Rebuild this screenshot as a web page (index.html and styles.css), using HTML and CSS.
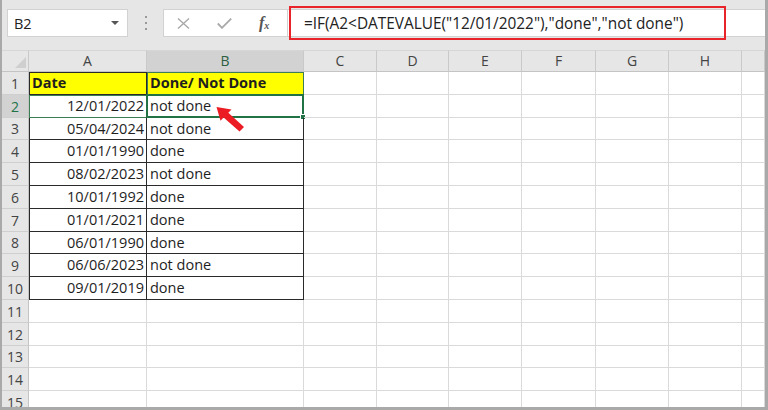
FILE: index.html
```html
<!DOCTYPE html>
<html>
<head>
<meta charset="utf-8">
<link rel="stylesheet" href="styles.css">
</head>
<body>
<div class="frame">
  <div class="toolbar">
    <div class="namebox"><span>B2</span><span class="caret"></span></div>
    <div class="dots"><i></i><i></i><i></i></div>
    <div class="fxbox">
      <svg class="ico" width="13" height="11" viewBox="0 0 13 11"><path d="M1 0.5 L12 10.5 M12 0.5 L1 10.5" stroke="#a9a9a9" stroke-width="1.4" fill="none"/></svg>
      <svg class="ico" width="15" height="11" viewBox="0 0 15 11"><path d="M0.8 5.5 L5 9.8 L14.2 0.6" stroke="#a9a9a9" stroke-width="1.8" fill="none"/></svg>
      <span class="fx">f<sub>x</sub></span>
    </div>
    <div class="formula"><span>=IF(A2&lt;DATEVALUE("12/01/2022"),"done","not done")</span><div class="highlight"></div></div>
  </div>
  <div class="sheet">
    <div class="row head">
      <div class="hc corner"><span class="tri"></span></div>
      <div class="hc">A</div><div class="hc sel">B</div><div class="hc">C</div><div class="hc">D</div><div class="hc">E</div><div class="hc">F</div><div class="hc">G</div><div class="hc">H</div><div class="hc"></div>
    </div>
    <div class="row">
      <div class="rh">1</div><div class="c t ta top yel b">Date</div><div class="c t top yel b grn">Done/ Not Done</div><div class="c"></div><div class="c"></div><div class="c"></div><div class="c"></div><div class="c"></div><div class="c"></div><div class="c"></div>
    </div>
    <div class="row">
      <div class="rh sel">2</div><div class="c t ta num grn">12/01/2022</div><div class="c t active">not done<span class="selbox"><span class="handle"></span></span></div><div class="c"></div><div class="c"></div><div class="c"></div><div class="c"></div><div class="c"></div><div class="c"></div><div class="c"></div>
    </div>
    <div class="row short">
      <div class="rh">3</div><div class="c t ta num">05/04/2024</div><div class="c t">not done</div><div class="c"></div><div class="c"></div><div class="c"></div><div class="c"></div><div class="c"></div><div class="c"></div><div class="c"></div>
    </div>
    <div class="row">
      <div class="rh">4</div><div class="c t ta num">01/01/1990</div><div class="c t">done</div><div class="c"></div><div class="c"></div><div class="c"></div><div class="c"></div><div class="c"></div><div class="c"></div><div class="c"></div>
    </div>
    <div class="row">
      <div class="rh">5</div><div class="c t ta num">08/02/2023</div><div class="c t">not done</div><div class="c"></div><div class="c"></div><div class="c"></div><div class="c"></div><div class="c"></div><div class="c"></div><div class="c"></div>
    </div>
    <div class="row">
      <div class="rh">6</div><div class="c t ta num">10/01/1992</div><div class="c t">done</div><div class="c"></div><div class="c"></div><div class="c"></div><div class="c"></div><div class="c"></div><div class="c"></div><div class="c"></div>
    </div>
    <div class="row">
      <div class="rh">7</div><div class="c t ta num">01/01/2021</div><div class="c t">done</div><div class="c"></div><div class="c"></div><div class="c"></div><div class="c"></div><div class="c"></div><div class="c"></div><div class="c"></div>
    </div>
    <div class="row short">
      <div class="rh">8</div><div class="c t ta num">06/01/1990</div><div class="c t">done</div><div class="c"></div><div class="c"></div><div class="c"></div><div class="c"></div><div class="c"></div><div class="c"></div><div class="c"></div>
    </div>
    <div class="row">
      <div class="rh">9</div><div class="c t ta num">06/06/2023</div><div class="c t">not done</div><div class="c"></div><div class="c"></div><div class="c"></div><div class="c"></div><div class="c"></div><div class="c"></div><div class="c"></div>
    </div>
    <div class="row">
      <div class="rh">10</div><div class="c t ta num">09/01/2019</div><div class="c t">done</div><div class="c"></div><div class="c"></div><div class="c"></div><div class="c"></div><div class="c"></div><div class="c"></div><div class="c"></div>
    </div>
    <div class="row">
      <div class="rh">11</div><div class="c"></div><div class="c"></div><div class="c"></div><div class="c"></div><div class="c"></div><div class="c"></div><div class="c"></div><div class="c"></div><div class="c"></div>
    </div>
    <div class="row">
      <div class="rh">12</div><div class="c"></div><div class="c"></div><div class="c"></div><div class="c"></div><div class="c"></div><div class="c"></div><div class="c"></div><div class="c"></div><div class="c"></div>
    </div>
    <div class="row short">
      <div class="rh">13</div><div class="c"></div><div class="c"></div><div class="c"></div><div class="c"></div><div class="c"></div><div class="c"></div><div class="c"></div><div class="c"></div><div class="c"></div>
    </div>
    <div class="row">
      <div class="rh">14</div><div class="c"></div><div class="c"></div><div class="c"></div><div class="c"></div><div class="c"></div><div class="c"></div><div class="c"></div><div class="c"></div><div class="c"></div>
    </div>
    <div class="row">
      <div class="rh">15</div><div class="c"></div><div class="c"></div><div class="c"></div><div class="c"></div><div class="c"></div><div class="c"></div><div class="c"></div><div class="c"></div><div class="c"></div>
    </div>
  </div>
  <svg class="arrow" width="768" height="410" viewBox="0 0 768 410"><polygon points="216.5,107 231.5,109.5 228.3,112.8 244,127 239.5,131.5 223.6,117.4 220.5,120.8" fill="#ec1c24"/></svg>
</div>
</body>
</html>
```

FILE: styles.css
```css
* { box-sizing: border-box; }
html, body { margin: 0; padding: 0; }
body {
  width: 768px;
  height: 410px;
  overflow: hidden;
  background: #e6e6e6;
  font-family: "Open Sans", "Liberation Sans", sans-serif;
}
.frame {
  position: relative;
  width: 768px;
  height: 410px;
  background: #e6e6e6;
  border-left: 2px solid #a9a9a9;
  border-right: 3px solid #a9a9a9;
  border-bottom: 3px solid #a9a9a9;
  display: flex;
  flex-direction: column;
  overflow: hidden;
}
.toolbar {
  height: 50px;
  flex: none;
  display: flex;
  align-items: flex-start;
  padding-top: 9px;
}
.namebox {
  margin-left: 5px;
  width: 121px;
  height: 28px;
  background: #fff;
  border: 1px solid #d2d2d2;
  display: flex;
  align-items: center;
  justify-content: space-between;
  padding: 0 8px 0 6px;
  font-size: 14.5px;
  color: #222;
}
.caret {
  width: 0; height: 0;
  border-left: 4px solid transparent;
  border-right: 4px solid transparent;
  border-top: 4px solid #555;
}
.dots {
  width: 35px;
  height: 28px;
  display: flex;
  flex-direction: column;
  align-items: center;
  justify-content: center;
  gap: 4px;
}
.dots i {
  width: 2px; height: 2px;
  background: #999;
  display: block;
}
.fxbox {
  width: 125px;
  height: 28px;
  background: #fff;
  border: 1px solid #d2d2d2;
  display: flex;
  align-items: center;
  gap: 27px;
  padding-left: 13px;
}
.ico { display: block; }
.fx {
  font-family: "Liberation Serif", "DejaVu Serif", serif;
  font-style: italic;
  font-weight: bold;
  font-size: 16px;
  color: #555;
  line-height: 1;
}
.fx sub { font-size: 10px; vertical-align: -1px; }
.formula {
  position: relative;
  flex: 1;
  height: 28px;
  background: #fff;
  border-top: 1px solid #d2d2d2;
  border-bottom: 1px solid #d2d2d2;
  display: flex;
  align-items: center;
  padding-left: 16px;
  font-size: 15.4px;
  color: #222;
  white-space: nowrap;
}
.highlight {
  position: absolute;
  left: 1px;
  top: -4px;
  width: 437px;
  height: 34px;
  border: 2px solid #e8232a;
}
.sheet {
  flex: 1;
  overflow: hidden;
  background: #fff;
}
.row {
  display: grid;
  grid-template-columns: 27px 118px 157px 73px 72px 73px 74px 73px 73px 1fr;
  height: 23px;
}
.row.short { height: 22px; }
.row.head {
  height: 22px;
  background: #e6e6e6;
}
.hc {
  border-right: 1px solid #c9c9c9;
  border-bottom: 1px solid #c4c4c4;
  border-top: 1px solid #d6d6d6;
  font-size: 14px;
  color: #444;
  display: flex;
  align-items: center;
  justify-content: center;
  line-height: 1;
}
.hc.sel {
  background: #d2d2d2;
  color: #2b5f3f;
}
.corner { position: relative; }
.tri {
  position: absolute;
  right: 2px;
  bottom: 3px;
  width: 0; height: 0;
  border-left: 11px solid transparent;
  border-bottom: 11px solid #cfcfcf;
}
.rh {
  background: #e6e6e6;
  border-right: 1px solid #c4c4c4;
  border-bottom: 1px solid #cfcfcf;
  font-size: 14px;
  color: #444;
  display: flex;
  align-items: center;
  justify-content: center;
  line-height: 1;
  padding-top: 1px;
}
.rh.sel {
  background: #d2d2d2;
  color: #217346;
}
.c {
  position: relative;
  border-right: 1px solid #dadada;
  border-bottom: 1px solid #dadada;
  font-size: 14.5px;
  color: #1e1e1e;
  padding: 1px 2px 0 3px;
  display: flex;
  align-items: center;
  white-space: nowrap;
  line-height: 1;
}
.c.t {
  border-right-color: #2a2a2a;
  border-bottom-color: #2a2a2a;
}
.c.ta { box-shadow: inset 1px 0 0 #2a2a2a; }
.c.ta.top { box-shadow: inset 1px 0 0 #2a2a2a, inset 0 1px 0 #2a2a2a; }
.c.top { box-shadow: inset 0 1px 0 #2a2a2a; }
.c.yel { background: #ffff00; }
.c.b { font-weight: bold; }
.c.num { justify-content: flex-end; }
.c.grn {
  border-right-color: #3d7d56;
  border-bottom-color: #3d7d56;
  box-shadow: inset 1px 1px 0 #3d7d56;
}
.selbox {
  position: absolute;
  left: -1px;
  top: -1px;
  right: -1px;
  bottom: -1px;
  border: 2px solid #217346;
}
.handle {
  position: absolute;
  right: -4px;
  bottom: -4px;
  width: 6px;
  height: 6px;
  background: #217346;
  border: 1px solid #fff;
}
.arrow {
  position: absolute;
  left: -2px;
  top: 0;
  pointer-events: none;
}
```
